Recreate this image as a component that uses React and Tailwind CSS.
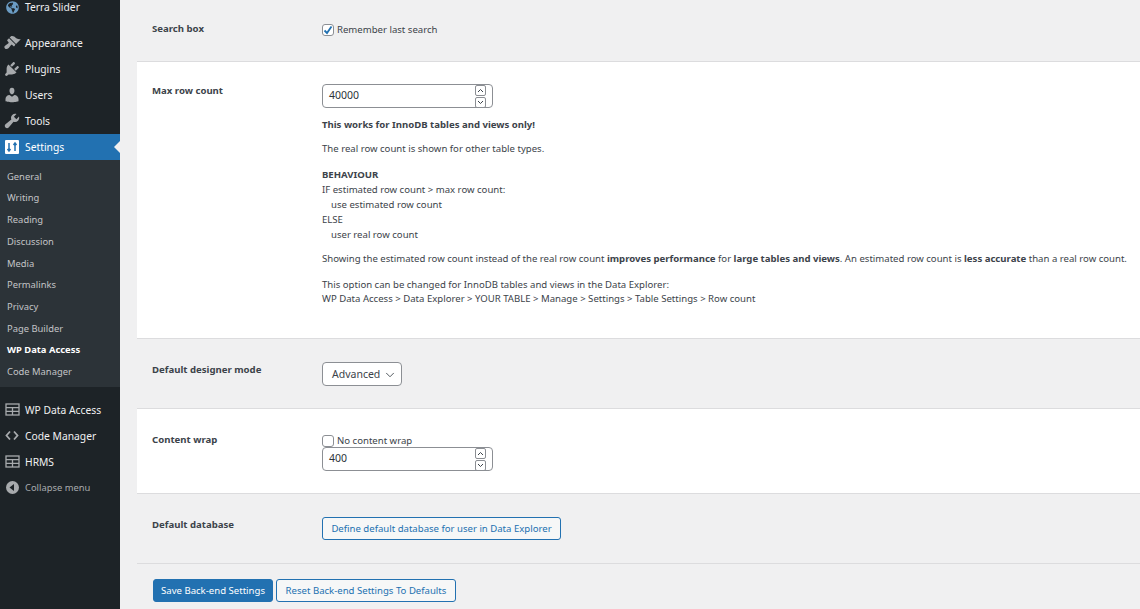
import { ChevronDown } from "lucide-react";
import { FaGlobeAmericas } from "react-icons/fa";

const BrushIcon = () => (
  <svg width="18" height="18" viewBox="0 0 20 20" fill="currentColor">
    <path d="M14.480 11.060 7.410 3.990l1.500-1.500c.5-.56 2.300-.47 3.510.32 1.210.8 1.430 1.280 2.910 2.100 1.180.64 2.450 1.260 4.450.85zm-.71.71L6.700 4.700 4.930 6.470c-.39.39-.39 1.020 0 1.410l1.060 1.060c.39.39.39 1.030 0 1.420-.6.6-1.430 1.110-2.210 1.690-.35.26-.7.53-1.010.84C1.430 13.230 1 14.870 2.200 16.070c1.200 1.200 2.840.77 4.180-.57.31-.31.58-.66.84-1.010.58-.78 1.090-1.610 1.690-2.210.39-.39 1.030-.39 1.420 0l1.060 1.060c.39.39 1.020.39 1.410 0z" />
  </svg>
);

const PluginIcon = () => (
  <svg width="18" height="18" viewBox="0 0 20 20" fill="currentColor">
    <path d="M13.110 4.360 9.870 7.600 8 5.730l3.240-3.240c.35-.34 1.050-.2 1.560.32.52.51.66 1.210.31 1.550zm-8 1.770.91-1.120 9.010 9.010-1.190.84c-.71.71-2.630 1.160-3.820 1.160H6.140L4.900 17.260c-.59.59-1.540.59-2.120 0-.59-.58-.59-1.530 0-2.120l1.240-1.240v-3.880c0-1.130.4-3.190 1.090-3.890zm7.260 3.970 3.240-3.240c.34-.35 1.040-.21 1.550.31.52.51.66 1.210.31 1.550l-3.240 3.250z" />
  </svg>
);

const UsersIcon = () => (
  <svg width="18" height="18" viewBox="0 0 20 20" fill="currentColor">
    <path d="M10 9.250c-2.270 0-2.730-3.440-2.730-3.440C7 4.020 7.820 2 9.970 2c2.160 0 2.980 2.020 2.710 3.810 0 0-.41 3.440-2.680 3.440zm0 2.570L12.720 10c2.390 0 4.520 2.330 4.520 4.530v2.490s-3.650 1.130-7.240 1.130c-3.650 0-7.240-1.130-7.240-1.130v-2.490c0-2.250 1.940-4.480 4.470-4.480z" />
  </svg>
);

const ToolsIcon = () => (
  <svg width="18" height="18" viewBox="0 0 20 20" fill="currentColor">
    <path d="M16.680 9.770c-1.340 1.340-3.300 1.670-4.950.99l-5.410 6.520c-.99.99-2.590.99-3.580 0s-.99-2.590 0-3.570l6.520-5.420c-.68-1.650-.35-3.610.99-4.950 1.280-1.280 3.120-1.620 4.720-1.060l-2.890 2.890 2.820 2.820 2.860-2.870c.53 1.580.18 3.390-1.080 4.650z" />
  </svg>
);

const TableIcon = () => (
  <svg width="15" height="13" viewBox="0 0 15 13" fill="none" stroke="currentColor" strokeWidth="1.300">
    <rect x="1" y="1" width="13" height="11" />
    <path d="M1 4.700h13M1 8.300h13M7.500 4.700V12" />
  </svg>
);

const CodeIcon = () => (
  <svg width="14" height="11" viewBox="0 0 14 11" fill="none" stroke="currentColor" strokeWidth="1.800">
    <path d="M5 1.500 1.500 5.500 5 9.500M9 1.500l3.500 4L9 9.500" />
  </svg>
);

const SettingsIcon = () => (
  <svg width="14" height="14" viewBox="0 0 14 14">
    <rect width="14" height="14" rx="1" fill="#fff" />
    <path d="M4 3v8M2.500 9 4 11l1.500-2M10 11V3M8.500 5 10 3l1.500 2" fill="none" stroke="#2271b1" strokeWidth="1.500" />
  </svg>
);

const CollapseIcon = () => (
  <svg width="13" height="13" viewBox="0 0 13 13">
    <circle cx="6.500" cy="6.500" r="6.500" fill="#a7aaad" />
    <path d="M8 3v7L3.500 6.500z" fill="#1d2327" />
  </svg>
);

const topItems = [
  { label: "Appearance", icon: <BrushIcon /> },
  { label: "Plugins", icon: <PluginIcon /> },
  { label: "Users", icon: <UsersIcon /> },
  { label: "Tools", icon: <ToolsIcon /> },
];

const subItems = ["General", "Writing", "Reading", "Discussion", "Media", "Permalinks", "Privacy", "Page Builder", "WP Data Access", "Code Manager"];

const MenuItem = ({ icon, label }) => (
  <div className="flex h-[26px] items-center text-[#f0f0f1]">
    <span className="flex w-[24px] justify-center text-[#a7aaad]">{icon}</span>
    <span className="ml-px pt-px text-[10.300px]">{label}</span>
  </div>
);

const Spinner = () => (
  <span className="flex flex-col gap-px">
    <span className="flex h-[11px] w-[11px] items-center justify-center rounded-[2px] border border-[#8c8f94]">
      <svg width="7" height="5" viewBox="0 0 7 5" fill="none" stroke="#3c434a"><path d="M1 4 3.500 1.500 6 4" /></svg>
    </span>
    <span className="flex h-[11px] w-[11px] items-center justify-center rounded-[2px] border border-[#8c8f94]">
      <svg width="7" height="5" viewBox="0 0 7 5" fill="none" stroke="#3c434a"><path d="M1 1 3.500 3.500 6 1" /></svg>
    </span>
  </span>
);

const NumberBox = ({ value }) => (
  <div className="flex h-[24px] w-[171px] items-center justify-between rounded-[4px] border border-[#8c8f94] bg-white px-[6px] text-[10.500px] text-[#2c3338]">
    {value}
    <Spinner />
  </div>
);

const Row = ({ label, white, className, labelClassName, children }) => (
  <div className={`flex border-b border-[#dcdcde] pl-[15px] ${white ? "bg-white" : ""} ${className}`}>
    <div className={`w-[170px] shrink-0 text-[9.600px] font-bold text-[#3c434a] ${labelClassName ?? ""}`}>{label}</div>
    <div>{children}</div>
  </div>
);

export default function App() {
  return (
    <div className="flex h-[609px] w-[1140px] overflow-hidden bg-[#f0f0f1] font-['Noto_Sans',sans-serif] text-[9.580px] text-[#3c434a]">
      <aside className="w-[120px] shrink-0 bg-[#1d2327]">
        <div className="-mt-[6px]">
          <MenuItem icon={<FaGlobeAmericas size={13} className="text-[#6b9cc4]" />} label="Terra Slider" />
        </div>
        <div className="mt-[10px]">
          {topItems.map((item) => (
            <MenuItem key={item.label} icon={item.icon} label={item.label} />
          ))}
        </div>
        <div className="relative flex h-[26px] items-center bg-[#2271b1] text-white">
          <span className="flex w-[24px] justify-center"><SettingsIcon /></span>
          <span className="ml-px pt-px text-[10.300px]">Settings</span>
          <span className="absolute right-0 top-[7px] border-y-[6px] border-r-[6px] border-y-transparent border-r-[#f0f0f1]" />
        </div>
        <div className="bg-[#2c3338] pb-[4px] pt-[6px]">
          {subItems.map((item) => (
            <div key={item} className={`flex h-[21.700px] items-center pl-[7px] text-[9.400px] ${item === "WP Data Access" ? "font-bold text-white" : "text-[#c3c4c7]"}`}>
              {item}
            </div>
          ))}
        </div>
        <div className="mt-[10px]">
          <MenuItem icon={<TableIcon />} label="WP Data Access" />
          <MenuItem icon={<CodeIcon />} label="Code Manager" />
          <MenuItem icon={<TableIcon />} label="HRMS" />
          <div className="flex h-[26px] items-center text-[#a7aaad]">
            <span className="flex w-[24px] justify-center"><CollapseIcon /></span>
            <span className="ml-px pt-px text-[9.400px]">Collapse menu</span>
          </div>
        </div>
      </aside>

      <main className="ml-[17px] min-w-0 flex-1">
        <Row label="Search box" className="h-[62px] pt-[22px]">
          <label className="mt-px flex items-center gap-[3px]">
            <span className="flex h-[12px] w-[12px] items-center justify-center rounded-[3px] border border-[#8c8f94] bg-white">
              <svg width="10" height="10" viewBox="0 0 10 10" fill="none" stroke="#2271b1" strokeWidth="1.800"><path d="M1.500 5.500 4 8l4.500-6.500" /></svg>
            </span>
            Remember last search
          </label>
        </Row>

        <Row label="Max row count" white className="h-[277px] pt-[22px]">
          <NumberBox value="40000" />
          <p className="mt-[10px] font-bold leading-[14px]">This works for InnoDB tables and views only!</p>
          <p className="mt-[10px] leading-[14px]">The real row count is shown for other table types.</p>
          <p className="mt-[12px] font-bold leading-[14px]">BEHAVIOUR</p>
          <p className="leading-[15px]">IF estimated row count &gt; max row count:</p>
          <p className="pl-[9px] leading-[15px]">use estimated row count</p>
          <p className="leading-[15px]">ELSE</p>
          <p className="pl-[9px] leading-[15px]">user real row count</p>
          <p className="mt-[10px] whitespace-nowrap leading-[14px]">
            Showing the estimated row count instead of the real row count <b>improves performance</b> for <b>large tables and views</b>. An estimated row count is <b>less accurate</b> than a real row count.
          </p>
          <p className="mt-[12px] leading-[14px]">This option can be changed for InnoDB tables and views in the Data Explorer:</p>
          <p className="leading-[14px]">WP Data Access &gt; Data Explorer &gt; YOUR TABLE &gt; Manage &gt; Settings &gt; Table Settings &gt; Row count</p>
        </Row>

        <Row label="Default designer mode" labelClassName="pt-px" className="h-[70px] pt-[23px]">
          <div className="flex h-[24px] w-[80px] items-center justify-between rounded-[4px] border border-[#8c8f94] bg-white pl-[9px] pr-[4px] pt-px text-[10.500px]">
            Advanced
            <ChevronDown size={14} strokeWidth={1.500} />
          </div>
        </Row>

        <Row label="Content wrap" white className="h-[85px] pt-[24px]">
          <label className="mt-px -mb-px flex items-center gap-[3px]">
            <span className="h-[12px] w-[12px] rounded-[3px] border border-[#8c8f94] bg-white" />
            No content wrap
          </label>
          <NumberBox value="400" />
        </Row>

        <Row label="Default database" className="h-[70px] pt-[24px]">
          <button className="-mt-px block h-[23px] w-[239px] rounded-[3px] border border-[#2271b1] bg-[#f6f7f7] pt-px text-[#2271b1]">
            Define default database for user in Data Explorer
          </button>
        </Row>

        <div className="flex gap-[3px] pl-[16px] pt-[15px]">
          <button className="h-[23px] w-[120px] rounded-[3px] border border-[#2271b1] bg-[#2271b1] pt-px text-white">
            Save Back-end Settings
          </button>
          <button className="h-[23px] w-[180px] rounded-[3px] border border-[#2271b1] bg-[#f6f7f7] pt-px text-[#2271b1]">
            Reset Back-end Settings To Defaults
          </button>
        </div>
      </main>
    </div>
  );
}
